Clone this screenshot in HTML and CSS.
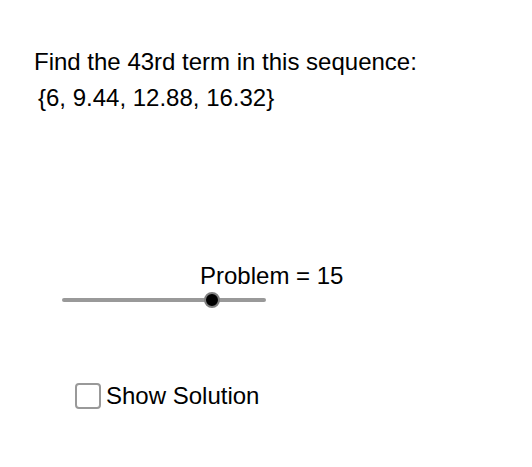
FILE: index.html
```html
<!DOCTYPE html>
<html lang="en">
<head>
  <meta charset="UTF-8">
  <title>Sequence Problem</title>
  <link rel="stylesheet" href="styles.css">
</head>
<body>
  <div class="applet">
    <div class="question">
      <p class="prompt">Find the 43rd term in this sequence:</p>
      <p class="terms">{6, 9.44, 12.88, 16.32}</p>
    </div>

    <div class="slider-box">
      <div class="slider-label">Problem = 15</div>
      <div class="track">
        <span class="knob" style="left: 73.5%;"></span>
      </div>
    </div>

    <label class="check">
      <span class="box"></span>
      <span>Show Solution</span>
    </label>
  </div>
</body>
</html>
```

FILE: styles.css
```css
body {
  margin: 0;
  background-color: #fff;
  color: #000;
  font-family: 'Liberation Sans', Arial, sans-serif;
  font-size: 24px;
}
.applet {
  width: 532px;
  height: 467px;
  display: flex;
  flex-direction: column;
}
.question {
  padding: 44px 0 0 34px;
}
.question p {
  margin: 0;
  line-height: 36px;
}
.terms {
  padding-left: 4px;
}
.slider-box {
  margin: 146px 0 0 62px;
  width: 204px;
}
.slider-label {
  margin-left: 138px;
  white-space: nowrap;
  line-height: 28px;
}
.track {
  position: relative;
  height: 4px;
  margin-top: 8px;
  background-color: #999;
  border-radius: 2px;
}
.knob {
  position: absolute;
  top: 50%;
  width: 12px;
  height: 12px;
  margin: -8px 0 0 -8px;
  background-color: #000;
  border: 2px solid #808080;
  border-radius: 50%;
}
.check {
  display: flex;
  align-items: center;
  gap: 5px;
  margin: 80px 0 0 75px;
}
.box {
  width: 22px;
  height: 22px;
  border: 2px solid #999;
  border-radius: 4px;
}
```
